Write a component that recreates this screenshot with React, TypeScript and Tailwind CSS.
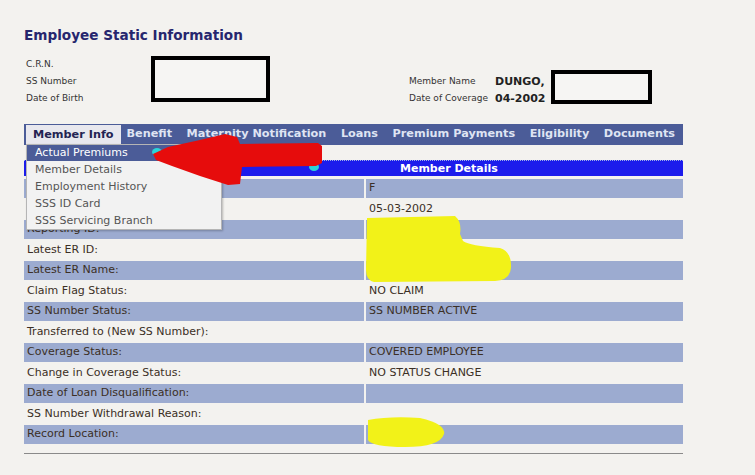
import React from "react";

const rows: { label: string; value: string }[] = [
  { label: "", value: "F" },
  { label: "", value: "05-03-2002" },
  { label: "Reporting ID:", value: "" },
  { label: "Latest ER ID:", value: "" },
  { label: "Latest ER Name:", value: "" },
  { label: "Claim Flag Status:", value: "NO CLAIM" },
  { label: "SS Number Status:", value: "SS NUMBER ACTIVE" },
  { label: "Transferred to (New SS Number):", value: "" },
  { label: "Coverage Status:", value: "COVERED EMPLOYEE" },
  { label: "Change in Coverage Status:", value: "NO STATUS CHANGE" },
  { label: "Date of Loan Disqualification:", value: "" },
  { label: "SS Number Withdrawal Reason:", value: "" },
  { label: "Record Location:", value: "" },
];

const tabs = ["Benefit", "Maternity Notification", "Loans", "Premium Payments", "Eligibility", "Documents"];

const menuItems = ["Member Details", "Employment History", "SSS ID Card", "SSS Servicing Branch"];

export default function App() {
  return (
    <div className="relative w-[755px] h-[475px] overflow-hidden bg-[#f3f2ef] font-['DejaVu_Sans',Verdana,sans-serif]">
      <div className="w-[659px] ml-[24px] pt-[25px]">
        {/* Title */}
        <h1 className="text-[13.6px] leading-[20px] font-bold text-[#26266e]">Employee Static Information</h1>

        {/* Header info */}
        <div className="flex mt-[11px] h-[58px] text-[9px] text-[#333]">
          <div className="w-[127px] pl-[2px] leading-[17px]">
            <div>C.R.N.</div>
            <div>SS Number</div>
            <div>Date of Birth</div>
          </div>
          <div className="w-[119px] h-[46px] border-[4px] border-black bg-[#f6f5f3]" />
          <div className="ml-[139px] pt-[17px] flex">
            <div className="w-[86px] leading-[17px]">
              <div>Member Name</div>
              <div>Date of Coverage</div>
            </div>
            <div className="w-[56px] leading-[17px] text-[11px] font-bold text-[#222]">
              <div>DUNGO,</div>
              <div>04-2002</div>
            </div>
            <div className="w-[101px] h-[34px] -mt-[3px] border-[4px] border-black bg-[#f6f5f3]" />
          </div>
        </div>

        {/* Nav bar */}
        <div className="mt-[10px] h-[21px] bg-[#4b5c98] flex items-stretch pl-[2px] text-[11.25px] font-bold">
          <div className="bg-[#e8e8ee] text-[#232352] px-[7px] flex items-center mt-[1px]">Member Info</div>
          <div className="flex items-center gap-[14.5px] pl-[6px] text-[#dfe4f3]">
            {tabs.map((t) => (
              <span key={t}>{t}</span>
            ))}
          </div>
        </div>

        {/* Member details header */}
        <div className="mt-[15px] h-[16px] bg-[#1c1cec] border-t border-dotted border-[#9fb0e8] text-white text-[11px] font-bold leading-[15px] pl-[376px]">
          Member Details
        </div>

        {/* Detail rows */}
        <div className="mt-[3px] flex flex-col gap-[2px] text-[11px] text-[#3b2f25]">
          {rows.map((r, i) => {
            const shaded = i % 2 === 0;
            return (
              <div key={i} className="flex gap-[2px] h-[18.5px] leading-[18.5px]">
                <div className={`w-[340px] pl-[3px] ${shaded ? "bg-[#9cabd0]" : ""}`}>{r.label}</div>
                <div className={`flex-1 pl-[3px] ${shaded ? "bg-[#9cabd0]" : ""}`}>{r.value}</div>
              </div>
            );
          })}
        </div>

        <div className="mt-[9px] h-[1px] bg-[#8a8a8a]" />
      </div>

      {/* Dropdown menu */}
      <div className="absolute left-[26px] top-[144px] w-[196px] bg-[#f2f2f2] border border-[#b5b5b5] shadow-[1px_1px_2px_rgba(0,0,0,0.25)] text-[11px]">
        <div className="h-[16px] leading-[16px] bg-[#4b5c98] text-white pl-[8px]">Actual Premiums</div>
        {menuItems.map((m) => (
          <div key={m} className="h-[17px] leading-[17px] pl-[8px] text-[#555]">
            {m}
          </div>
        ))}
      </div>

      {/* Annotations */}
      <svg className="absolute inset-0 pointer-events-none" width="755" height="475">
        <ellipse cx="157" cy="152" rx="5" ry="4" fill="#2ad4d8" />
        <ellipse cx="314" cy="167" rx="5" ry="4" fill="#2ad4d8" />
        <path
          d="M153,154 L168,147 L200,140 L225,134 L237,137 L240,144 L318,143 L322,146 L322,163 L316,166 L242,167 L240,184 L228,185 L200,176 L172,166 L156,160 Z"
          fill="#e60c0c"
        />
        <path
          d="M367,218 L455,216 Q462,222 460,234 L463,241 Q470,246 500,248 Q512,252 511,268 Q510,280 495,281 L374,282 Q366,280 366,270 Z"
          fill="#f2f218"
        />
        <path d="M368,420 Q390,416 420,418 Q446,424 444,434 Q440,447 405,447 Q372,447 368,440 Z" fill="#f2f218" />
      </svg>
    </div>
  );
}
